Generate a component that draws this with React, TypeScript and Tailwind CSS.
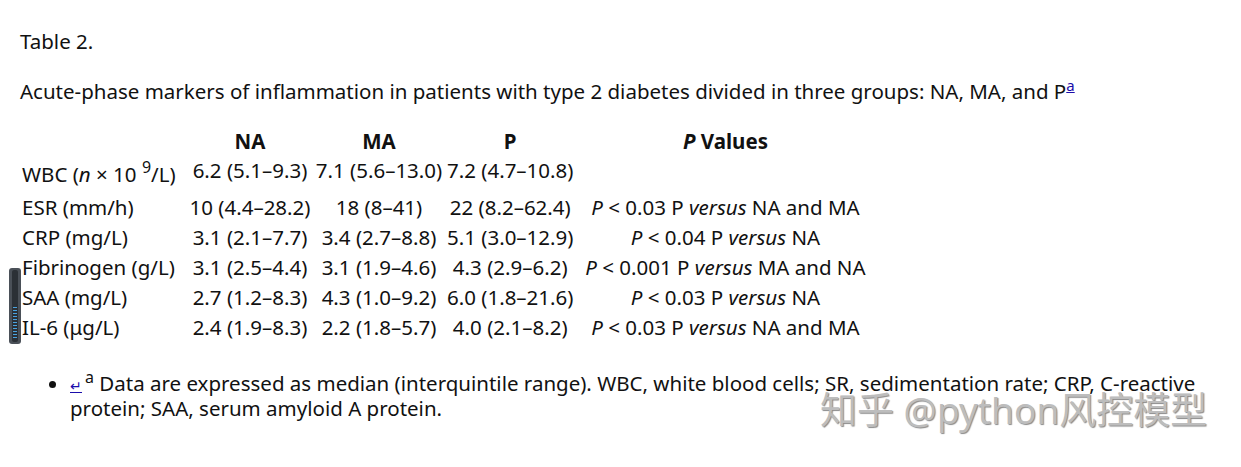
import React from "react";

const rows: { label: React.ReactNode; na: string; ma: string; p: string; pv?: React.ReactNode; tall?: boolean }[] = [
  {
    label: (
      <>
        WBC (<i>n</i> × 10 <sup className="text-[16px] -top-[9px]">9</sup>/L)
      </>
    ),
    na: "6.2 (5.1–9.3)",
    ma: "7.1 (5.6–13.0)",
    p: "7.2 (4.7–10.8)",
    tall: true,
  },
  {
    label: "ESR (mm/h)",
    na: "10 (4.4–28.2)",
    ma: "18 (8–41)",
    p: "22 (8.2–62.4)",
    pv: (
      <>
        <i>P</i> &lt; 0.03 P <i>versus</i> NA and MA
      </>
    ),
  },
  {
    label: "CRP (mg/L)",
    na: "3.1 (2.1–7.7)",
    ma: "3.4 (2.7–8.8)",
    p: "5.1 (3.0–12.9)",
    pv: (
      <>
        <i>P</i> &lt; 0.04 P <i>versus</i> NA
      </>
    ),
  },
  {
    label: "Fibrinogen (g/L)",
    na: "3.1 (2.5–4.4)",
    ma: "3.1 (1.9–4.6)",
    p: "4.3 (2.9–6.2)",
    pv: (
      <>
        <i>P</i> &lt; 0.001 P <i>versus</i> MA and NA
      </>
    ),
  },
  {
    label: "SAA (mg/L)",
    na: "2.7 (1.2–8.3)",
    ma: "4.3 (1.0–9.2)",
    p: "6.0 (1.8–21.6)",
    pv: (
      <>
        <i>P</i> &lt; 0.03 P <i>versus</i> NA
      </>
    ),
  },
  {
    label: "IL-6 (μg/L)",
    na: "2.4 (1.9–8.3)",
    ma: "2.2 (1.8–5.7)",
    p: "4.0 (2.1–8.2)",
    pv: (
      <>
        <i>P</i> &lt; 0.03 P <i>versus</i> NA and MA
      </>
    ),
  },
];

export default function App() {
  const valTall = "px-0 text-center whitespace-nowrap align-top pt-[1px]";
  const val = "px-0 text-center whitespace-nowrap align-middle";
  return (
    <div
      className="relative w-[1241px] h-[467px] bg-white text-[#111] overflow-hidden"
      style={{ fontFamily: '"Noto Sans", "Noto Sans CJK SC", sans-serif' }}
    >
      <div className="px-[20px] pt-[28px] text-[20.5px] leading-[26px]">
        <p>Table 2.</p>
        <p className="mt-[24px]">
          Acute-phase markers of inflammation in patients with type 2 diabetes divided in three groups: NA, MA, and P
          <sup className="text-[15px] text-[#1a0dab] underline -top-[8px]">a</sup>
        </p>
        <table className="mt-[22px] border-separate border-spacing-x-[2px] border-spacing-y-[2px]">
          <thead>
            <tr>
              <th className="px-0 w-[165px] leading-[28px]"></th>
              <th className="px-0 w-[122px] font-bold text-center">NA</th>
              <th className="px-0 w-[132px] font-bold text-center">MA</th>
              <th className="px-0 w-[126px] font-bold text-center">P</th>
              <th className="px-0 w-[300px] font-bold text-center">
                <i>P</i> Values
              </th>
            </tr>
          </thead>
          <tbody>
            {rows.map((r, i) => (
              <tr key={i}>
                <td
                  className={
                    r.tall
                      ? "px-0 text-left whitespace-nowrap h-[35px] align-bottom leading-[28px] pb-[3px]"
                      : "px-0 text-left whitespace-nowrap leading-[28px] align-middle"
                  }
                >
                  {r.label}
                </td>
                <td className={r.tall ? valTall : val}>{r.na}</td>
                <td className={r.tall ? valTall : val}>{r.ma}</td>
                <td className={r.tall ? valTall : val}>{r.p}</td>
                <td className={val}>{r.pv}</td>
              </tr>
            ))}
          </tbody>
        </table>
        <ul className="mt-[28px] pl-[50px] list-disc">
          <li className="leading-[25px]">
            <span className="text-[#1a0dab] underline text-[14px] leading-none mr-[3px]">↵</span>
            <sup className="text-[16px] -top-[8px]">a</sup> Data are expressed as median (interquintile range). WBC,
            white blood cells; SR, sedimentation rate; CRP, C-reactive protein; SAA, serum amyloid A protein.
          </li>
        </ul>
      </div>

      <div className="absolute left-[9px] top-[268px] w-[12px] h-[76px] rounded-[3px] bg-[#4a5058] flex flex-col items-center p-[2px]">
        <div className="w-[6px] flex-1 rounded-[2px] bg-[#2b3036] flex flex-col justify-end items-center pb-[4px] gap-[2px]">
          {Array.from({ length: 11 }).map((_, i) => (
            <div key={i} className="w-[4px] h-[1px] bg-[#4aa3e0]" />
          ))}
        </div>
      </div>

      <div
        className="absolute left-[820px] top-[388px] text-[37px] leading-[44px] text-[#bdbdbd] whitespace-nowrap"
        style={{ textShadow: "1px 1px 1px #8a8a8a" }}
      >
        知乎 @python风控模型
      </div>
    </div>
  );
}
